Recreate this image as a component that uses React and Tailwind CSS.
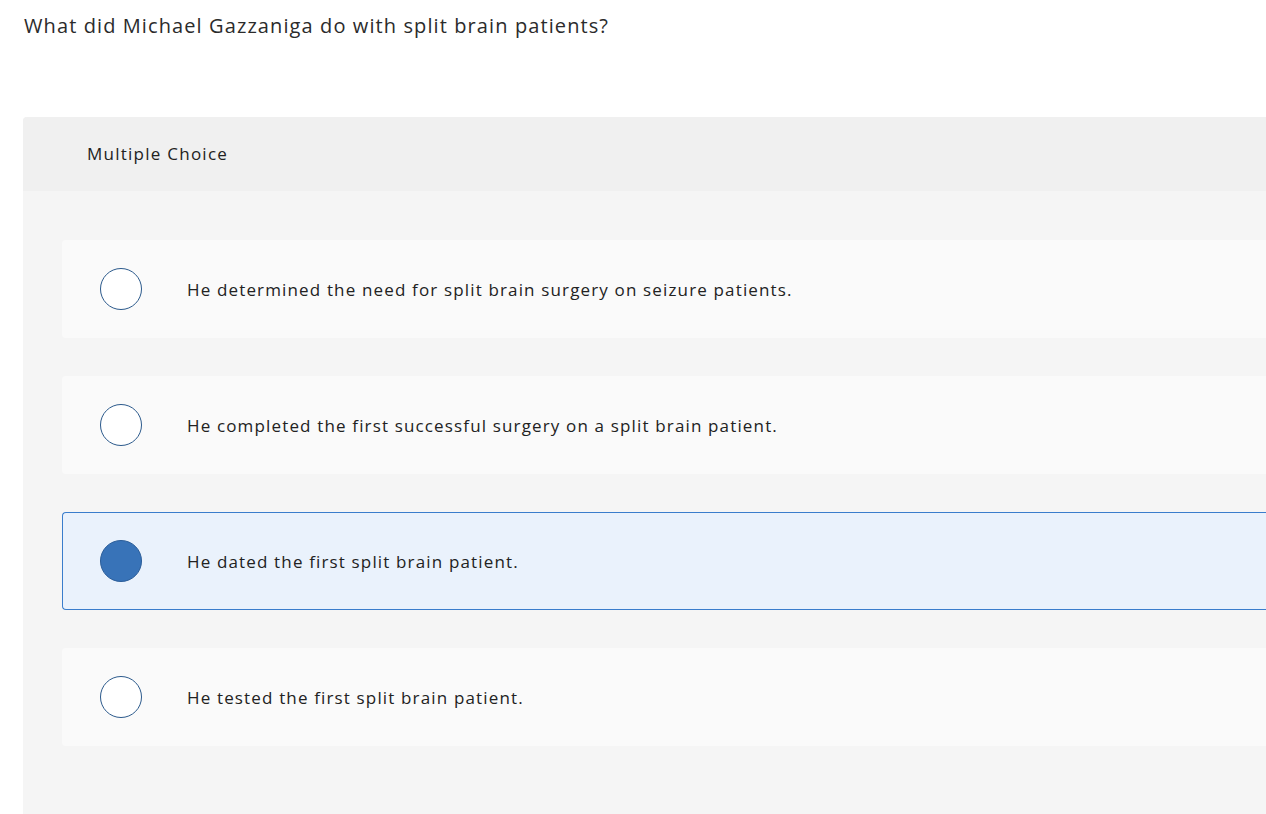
import React from "react";

const options = [
  "He determined the need for split brain surgery on seizure patients.",
  "He completed the first successful surgery on a split brain patient.",
  "He dated the first split brain patient.",
  "He tested the first split brain patient.",
];

export default function App() {
  const selected = 2;
  return (
    <div className="w-[1266px] h-[814px] overflow-hidden bg-white text-[#333]" style={{ fontFamily: "'Open Sans', sans-serif" }}>
      <div className="pl-[24px] pt-[12px] h-[117px] text-[20px] leading-[28px] tracking-[1.1px] text-[#2b2b2b]">
        What did Michael Gazzaniga do with split brain patients?
      </div>
      <div className="ml-[23px] rounded-tl-[4px] bg-[#f5f5f5] h-[697px]">
        <div className="h-[74px] bg-[#f0f0f0] rounded-tl-[4px] flex items-center pl-[64px] text-[17px] tracking-[1.25px] text-[#222]">
          Multiple Choice
        </div>
        <div className="pl-[39px] pt-[49px] flex flex-col gap-[38px]">
          {options.map((o, i) => {
            const sel = i === selected;
            return (
              <div
                key={i}
                className={
                  sel
                    ? "h-[98px] rounded-l-[4px] bg-[#eaf2fc] border border-r-0 border-[#3a7dcc] flex items-center pl-[37px]"
                    : "h-[98px] rounded-l-[4px] bg-[#fafafa] flex items-center pl-[38px]"
                }
              >
                {sel ? (
                  <div className="w-[42px] h-[42px] rounded-full bg-[#3873b8] border border-[#2a5d99] shrink-0" />
                ) : (
                  <div className="w-[42px] h-[42px] rounded-full bg-white border border-[#2c5a8c] shrink-0" />
                )}
                <div className="ml-[45px] pt-[2px] text-[17px] tracking-[1.15px] text-[#222]">{o}</div>
              </div>
            );
          })}
        </div>
      </div>
    </div>
  );
}
